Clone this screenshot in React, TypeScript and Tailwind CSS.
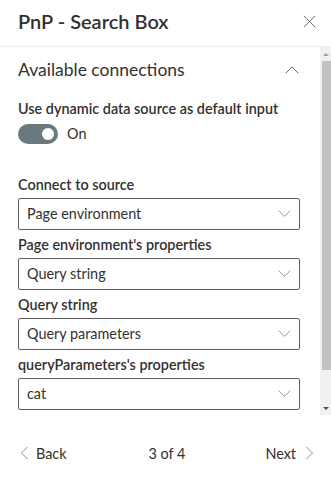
import React from 'react';

/* ---------------- ICONS ---------------- */
const Chevron: React.FC<{ dir: 'up' | 'down' | 'left' | 'right'; className?: string }> = ({ dir, className }) => {
  const paths: Record<string, string> = {
    down: 'M1 4.5 L8 11.5 L15 4.5',
    up: 'M1 11.5 L8 4.5 L15 11.5',
    left: 'M11 1 L4 8 L11 15',
    right: 'M5 1 L12 8 L5 15',
  };
  return (
    <svg viewBox="0 0 16 16" className={className} fill="none" stroke="currentColor" strokeWidth="1.1">
      <path d={paths[dir]} />
    </svg>
  );
};

/* ---------------- DROPDOWN FIELD ---------------- */
const DropdownField: React.FC<{ label: string; value: string; first?: boolean }> = ({ label, value, first }) => (
  <div className={first ? 'mt-[30px]' : 'mt-[5px]'}>
    <div className="text-[14.4px] leading-[20px] font-semibold text-[#323130]">{label}</div>
    <div className="mt-[3px] h-[32px] border border-[#605e5c] rounded-[2px] flex items-center justify-between pl-[8px] pr-[8px]">
      <span className="text-[14.4px] text-[#323130]">{value}</span>
      <Chevron dir="down" className="w-[13px] h-[13px] text-[#8a8886]" />
    </div>
  </div>
);

export default function App() {
  return (
    <div
      className="w-[331px] h-[484px] flex flex-col bg-white text-[#323130] overflow-hidden"
      style={{ fontFamily: 'Lato, "Open Sans", sans-serif' }}
    >
      {/* HEADER */}
      <div className="h-[47px] flex items-center justify-between pl-[18px] pr-[15px] border-b border-[#edebe9] shrink-0">
        <h1 className="text-[20px] font-semibold leading-none -mt-[5px]">PnP - Search Box</h1>
        <svg viewBox="0 0 16 16" className="w-[13px] h-[13px] -mt-[4px] text-[#605e5c]" stroke="currentColor" strokeWidth="1.1">
          <path d="M1 1 L15 15 M15 1 L1 15" />
        </svg>
      </div>

      {/* BODY + SCROLLBAR */}
      <div className="h-[368px] flex shrink-0">
        <div className="flex-1 pl-[18px] pr-[20px]">
          <div className="pt-[11px] h-[35px] flex items-center justify-between">
            <span className="text-[17.5px] text-[#323130]">Available connections</span>
            <Chevron dir="up" className="w-[14px] h-[14px] mr-[1px] text-[#605e5c]" />
          </div>

          <div className="mt-[17px] text-[14.4px] leading-[20px] font-semibold">
            Use dynamic data source as default input
          </div>
          <div className="mt-[4px] flex items-center gap-[9px]">
            <div className="w-[40px] h-[20px] rounded-full bg-[#69797e] flex items-center justify-end pr-[4px]">
              <div className="w-[12px] h-[12px] rounded-full bg-white" />
            </div>
            <span className="text-[14.4px]">On</span>
          </div>

          <DropdownField first label="Connect to source" value="Page environment" />
          <DropdownField label="Page environment's properties" value="Query string" />
          <DropdownField label="Query string" value="Query parameters" />
          <DropdownField label="queryParameters's properties" value="cat" />
        </div>

        {/* scrollbar */}
        <div className="w-[11px] bg-[#f1f1f1] flex flex-col items-center">
          <div className="h-[14px] flex items-center justify-center">
            <div className="w-0 h-0 border-l-[3px] border-r-[3px] border-b-[3px] border-l-transparent border-r-transparent border-b-[#a3a3a3]" />
          </div>
          <div className="w-[9px] h-[309px] bg-[#c1c1c1] ml-[2px]" />
          <div className="flex-1" />
          <div className="h-[14px] flex items-center justify-center">
            <div className="w-0 h-0 border-l-[3px] border-r-[3px] border-t-[3px] border-l-transparent border-r-transparent border-t-[#505050]" />
          </div>
        </div>
      </div>

      {/* FOOTER */}
      <div className="flex-1 flex items-center justify-between pl-[18px] pr-[15px] pt-[8px]">
        <div className="flex items-center gap-[4px] w-[80px]">
          <Chevron dir="left" className="w-[14px] h-[14px] text-[#8a8886]" />
          <span className="text-[14.4px]">Back</span>
        </div>
        <span className="text-[14.4px]">3 of 4</span>
        <div className="flex items-center justify-end gap-[6px] w-[80px]">
          <span className="text-[14.4px]">Next</span>
          <Chevron dir="right" className="w-[14px] h-[14px] text-[#8a8886]" />
        </div>
      </div>
    </div>
  );
}
